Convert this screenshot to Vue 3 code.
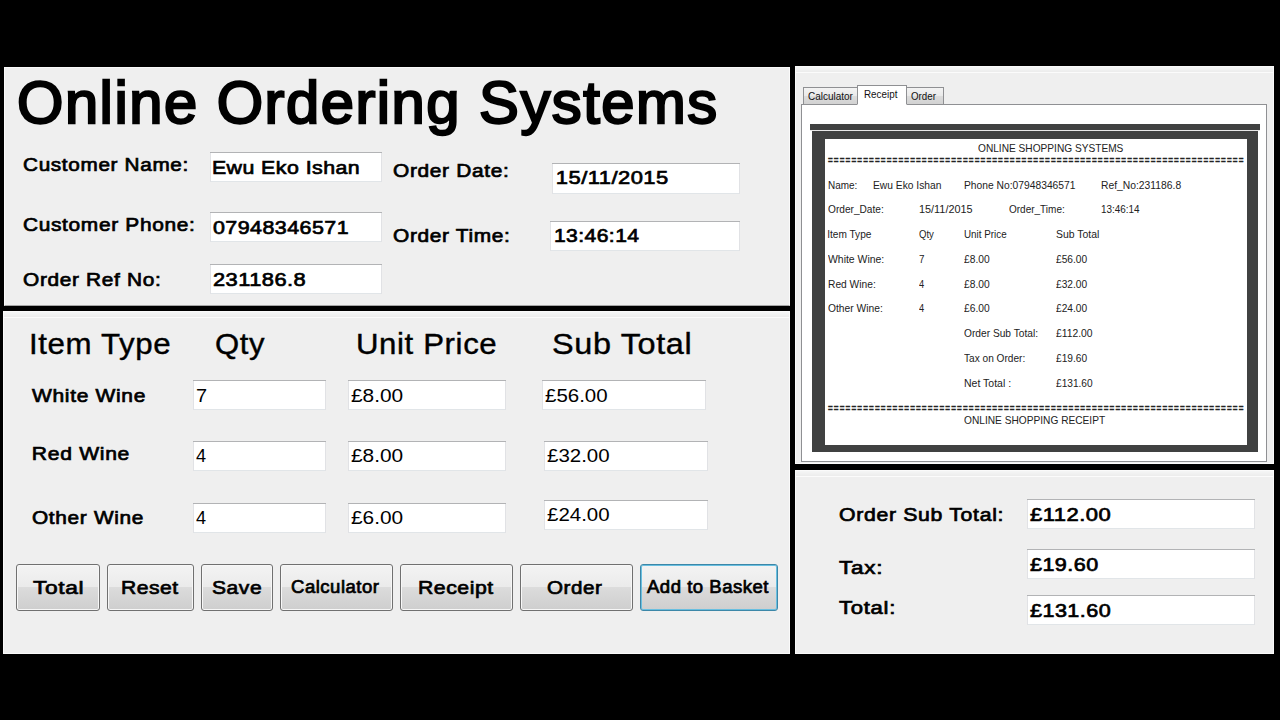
<script setup>
const customer = [
  { label: 'Customer Name:', lw: 164, value: 'Ewu Eko Ishan', vw: 146, cls: 'name' },
  { label: 'Customer Phone:', lw: 170.5, value: '07948346571', vw: 135, cls: 'phone' },
  { label: 'Order Ref No:', lw: 136.5, value: '231186.8', vw: 92, cls: 'ref' },
]
const timing = [
  { label: 'Order Date:', lw: 114.5, value: '15/11/2015', vw: 110.5, cls: 'date' },
  { label: 'Order Time:', lw: 116, value: '13:46:14', vw: 84.5, cls: 'time' },
]
const items = [
  { label: 'White Wine', lw: 113, qty: '7', price: '£8.00', sub: '£56.00' },
  { label: 'Red Wine', lw: 96, qty: '4', price: '£8.00', sub: '£32.00' },
  { label: 'Other Wine', lw: 111, qty: '4', price: '£6.00', sub: '£24.00' },
]
const buttons = [
  { text: 'Total', w: 49, cls: 'b-total' },
  { text: 'Reset', w: 57, cls: 'b-reset' },
  { text: 'Save', w: 49, cls: 'b-save' },
  { text: 'Calculator', w: 88, cls: 'b-calc' },
  { text: 'Receipt', w: 75, cls: 'b-receipt' },
  { text: 'Order', w: 55.5, cls: 'b-order' },
  { text: 'Add to Basket', w: 121.5, cls: 'b-basket' },
]
const totals = [
  { label: 'Order Sub Total:', lw: 163.5, value: '£112.00', vw: 80, cls: 't-sub' },
  { label: 'Tax:', lw: 42, value: '£19.60', vw: 67.5, cls: 't-tax' },
  { label: 'Total:', lw: 55, value: '£131.60', vw: 80, cls: 't-total' },
]
const lines = [
  { type: 'Item Type', w: 44, qty: 'Qty', qw: 15, price: 'Unit Price', pw: 43, sub: 'Sub Total', sw: 43 },
  { type: 'White Wine:', w: 56, qty: '7', qw: 5, price: '£8.00', pw: 26, sub: '£56.00', sw: 31.5 },
  { type: 'Red Wine:', w: 47.5, qty: '4', qw: 5.5, price: '£8.00', pw: 26, sub: '£32.00', sw: 31.5 },
  { type: 'Other Wine:', w: 54.5, qty: '4', qw: 5.5, price: '£6.00', pw: 26, sub: '£24.00', sw: 31.5 },
  { price: 'Order Sub Total:', pw: 74, sub: '£112.00', sw: 37 },
  { price: 'Tax on Order:', pw: 61, sub: '£19.60', sw: 31.5 },
  { price: 'Net Total :', pw: 47, sub: '£131.60', sw: 37 },
]
const rule = '='.repeat(71)

// Stretches a line of text so that its visible glyphs span the given width.
const ctx = document.createElement('canvas').getContext('2d')
const px = (v) => (v.endsWith('px') ? v : '0px')
const vFit = (el, { value }) => {
  const s = getComputedStyle(el)
  const gaps = el.textContent.length - 1
  ctx.font = `${s.fontWeight} ${s.fontSize} ${s.fontFamily}`
  const m = ctx.measureText(el.textContent)
  const spaces = el.textContent.split(' ').length - 1
  const extra = gaps * parseFloat(px(s.letterSpacing)) + spaces * parseFloat(px(s.wordSpacing))
  const k = value / (m.actualBoundingBoxLeft + m.actualBoundingBoxRight + extra)
  el.style.width = `${value}px`
  el.style.transform = `translateX(${m.actualBoundingBoxLeft * k}px) scaleX(${k})`
}
</script>

<template>
  <main class="stage">
    <div class="left">
      <section class="panel customer">
        <h1><span v-fit="696.5" class="t">Online Ordering Systems</span></h1>
        <div class="pairs">
          <div class="col">
            <div v-for="c in customer" :key="c.cls" class="pair" :class="c.cls">
              <div class="label"><span v-fit="c.lw" class="t">{{ c.label }}</span></div>
              <div class="field bold"><span v-fit="c.vw" class="t">{{ c.value }}</span></div>
            </div>
          </div>
          <div class="col">
            <div v-for="c in timing" :key="c.cls" class="pair" :class="c.cls">
              <div class="label"><span v-fit="c.lw" class="t">{{ c.label }}</span></div>
              <div class="field bold"><span v-fit="c.vw" class="t">{{ c.value }}</span></div>
            </div>
          </div>
        </div>
      </section>

      <section class="panel order">
        <div class="strip"></div>
        <div class="row head">
          <span v-fit="139.5" class="t">Item Type</span>
          <span v-fit="48.5" class="t c2">Qty</span>
          <span v-fit="138" class="t c3">Unit Price</span>
          <span v-fit="137.5" class="t c4">Sub Total</span>
        </div>
        <div v-for="(i, n) in items" :key="i.label" class="row item" :class="'item' + n">
          <div class="label"><span v-fit="i.lw" class="t">{{ i.label }}</span></div>
          <div class="field"><span v-fit="10.5" class="t">{{ i.qty }}</span></div>
          <div class="field"><span v-fit="51.5" class="t">{{ i.price }}</span></div>
          <div class="field sub"><span v-fit="62" class="t">{{ i.sub }}</span></div>
        </div>
        <div class="buttons">
          <button v-for="b in buttons" :key="b.text" :class="b.cls">
            <span v-fit="b.w" class="t">{{ b.text }}</span>
          </button>
        </div>
      </section>
    </div>

    <div class="right">
      <section class="panel viewer">
        <div class="strip"></div>
        <nav class="tabs">
          <div class="tab calc"><span v-fit="45" class="t">Calculator</span></div>
          <div class="tab active"><span v-fit="34" class="t">Receipt</span></div>
          <div class="tab ord"><span v-fit="25" class="t">Order</span></div>
        </nav>
        <div class="page">
          <div class="bar"></div>
          <div class="frame">
            <div class="paper">
              <div class="line title"><span v-fit="145.5" class="t">ONLINE SHOPPING SYSTEMS</span></div>
              <div class="rule"><span v-fit="415.5" class="t">{{ rule }}</span></div>
              <div class="line who">
                <span v-fit="29" class="t">Name:</span>
                <span v-fit="68" class="t">Ewu Eko Ishan</span>
                <span v-fit="111" class="t">Phone No:07948346571</span>
                <span v-fit="80.5" class="t">Ref_No:231186.8</span>
              </div>
              <div class="line when">
                <span v-fit="55.5" class="t">Order_Date:</span>
                <span v-fit="54" class="t">15/11/2015</span>
                <span v-fit="55.5" class="t">Order_Time:</span>
                <span v-fit="39" class="t">13:46:14</span>
              </div>
              <div v-for="(l, n) in lines" :key="n" class="line cols">
                <div><span v-if="l.type" v-fit="l.w" class="t">{{ l.type }}</span></div>
                <div><span v-if="l.qty" v-fit="l.qw" class="t">{{ l.qty }}</span></div>
                <div><span v-fit="l.pw" class="t">{{ l.price }}</span></div>
                <div><span v-fit="l.sw" class="t">{{ l.sub }}</span></div>
              </div>
              <div class="rule second"><span v-fit="415.5" class="t">{{ rule }}</span></div>
              <div class="line foot"><span v-fit="141" class="t">ONLINE SHOPPING RECEIPT</span></div>
            </div>
          </div>
        </div>
      </section>

      <section class="panel totals">
        <div class="strip"></div>
        <div v-for="t in totals" :key="t.cls" class="pair" :class="t.cls">
          <div class="label"><span v-fit="t.lw" class="t">{{ t.label }}</span></div>
          <div class="field bold"><span v-fit="t.vw" class="t">{{ t.value }}</span></div>
        </div>
      </section>
    </div>
  </main>
</template>

<style>
body { background: #000; }
</style>

<style scoped>
* { box-sizing: border-box; }
.stage {
  width: 1280px; height: 720px; overflow: hidden; background: #000;
  display: flex; gap: 5px; padding: 66px 0 0 3px;
  font-family: "Liberation Sans", Arial, sans-serif; color: #000;
}
.t { display: inline-block; white-space: pre; transform-origin: 0 50%; flex: none; text-align: left; }
.left { width: 787px; display: flex; flex-direction: column; gap: 5px; padding-top: 1px; }
.right { width: 479px; display: flex; flex-direction: column; gap: 6px; }
.panel { background: #efefef; border: 1px solid #fafafa; flex: none; overflow: hidden; }
.strip { height: 6px; background: linear-gradient(#f5f6f6, #ececec); border-bottom: 1px solid #fbfbfb; }

.label {
  height: 30px; line-height: 30px; font-size: 18.5px; letter-spacing: .6px;
  -webkit-text-stroke: .7px #000; display: flex; flex: none;
}
.field {
  height: 30px; line-height: 31px; font-size: 19px; background: #fff; display: flex; flex: none; padding-left: 3px;
  box-shadow: inset 0 1px #b2b3b5, inset 1px 0 #e1e2e5, inset -1px 0 #e1e2e5, inset 0 -1px #e1e5e8;
}
.field.bold { -webkit-text-stroke: .7px #000; letter-spacing: .4px; }
.pair { display: flex; align-items: flex-start; }

/* customer */
.customer { margin-left: 1px; height: 239px; border-bottom-color: #a5a5a5; }
h1 {
  margin: 0; padding-left: 14px; height: 84px; line-height: 71px; display: flex;
  font-size: 59px; font-weight: 400; letter-spacing: 1.5px; -webkit-text-stroke: 2.3px #000;
}
.pairs { display: flex; }
.col:first-child { width: 388px; }
.col:first-child .pair { padding-left: 18px; }
.col:first-child .label { width: 187px; }
.col:first-child .field { width: 172px; }
.name { height: 60px; }
.phone { height: 52px; }
.name .label, .phone .label { margin-top: -2.5px; }
.ref .label { margin-top: .5px; }
.col:last-child .label { width: 158px; }
.date { padding-top: 3.5px; height: 69px; }
.date .field { margin: 7px 0 0 1px; height: 31px; line-height: 29.5px; width: 188px; padding-left: 5px; }
.time .label { margin-top: -.5px; }
.time .field { width: 190px; padding-left: 5px; margin-left: -1px; line-height: 29.5px; }

/* order */
.order { height: 343px; }
.row { display: flex; align-items: flex-start; padding-left: 28px; }
.head { height: 62px; line-height: 30px; font-size: 30px; letter-spacing: .6px; padding: 11px 0 0 26.5px; -webkit-text-stroke: .4px #000; }
.c2 { margin-left: 46px; }
.c3 { margin-left: 93px; }
.c4 { margin-left: 57.5px; }
.item { height: 61px; }
.item .label { width: 161px; }
.item .field:nth-child(2) { width: 133px; padding-left: 2.5px; margin-right: 22px; }
.item .field:nth-child(3) { width: 158px; margin-right: 36px; }
.item .sub { width: 164px; padding-left: 2.5px; }
.item0 .label { margin-top: .5px; }
.item1 .label { margin-top: -2.5px; padding-left: .5px; }
.item1 .field, .item2 .field { line-height: 30px; }
.item1 .sub, .item2 .sub { margin-left: 2px; }
.item2 { padding-top: .5px; }
.item2 .sub { margin-top: -2.5px; }
.buttons { display: flex; gap: 7px; padding-left: 12px; margin-top: 1px; }
button {
  font: 19px/46px "Liberation Sans", Arial, sans-serif; letter-spacing: .5px; -webkit-text-stroke: .7px #000; color: #000;
  height: 47px; padding: 0; border: 1px solid #707070; border-radius: 3px;
  background: linear-gradient(#f3f3f3 0%, #ebebeb 48%, #dcdcdc 49%, #cecece 100%);
  box-shadow: inset 0 0 0 1px #f7f7f7; flex: none; display: flex; justify-content: center;
}
.b-total { width: 84px; } .b-reset { width: 87px; } .b-save { width: 72px; }
.b-calc, .b-receipt { width: 113px; } .b-order { width: 113px; }
.b-calc, .b-basket { font-size: 18px; line-height: 45px; }
.b-basket { width: 138px; border-color: #3c87a8; box-shadow: inset 0 0 0 1px #69bfe0; }
.b-total, .b-save, .b-basket { padding-right: 2px; }
.b-order, .b-calc { padding-right: 4px; }
.b-receipt { padding-right: 1px; }

/* receipt viewer */
.viewer { height: 398px; padding-left: 6px; }
.viewer .strip { margin-left: -6px; }
.tabs { display: flex; align-items: flex-end; height: 32px; font-size: 11.8px; position: relative; z-index: 1; padding-left: 1px; }
.tab { height: 18px; line-height: 17px; border: 1px solid #8f9093; background: linear-gradient(#f3f3f3, #eaeaea 48%, #dcdcdc 50%, #d2d2d2); flex: none; color: #111; }
.calc { width: 54px; padding-left: 4px; border-right: 0; }
.ord { width: 37px; padding-left: 3.5px; border-left: 0; }
.active { width: 50px; height: 20px; padding-left: 6px; line-height: 17px; background: #fff; border-bottom-color: #fff; }
.page { width: 466px; height: 358px; margin: -1px 0 0 -1px; background: #fff; border: 1px solid #8f9093; padding: 19px 0 0 8px; }
.bar { width: 450px; height: 7px; background: #404141; border-bottom: 1px solid #e8e8e8; }
.frame { margin-left: 2px; width: 446px; height: 321px; background: #404141; padding: 8px 0 0 13px; }
.paper { width: 422px; height: 306px; background: #fff; font-size: 11.8px; color: #222; padding: 1px 0 0 2.5px; }
.line { display: flex; height: 24.75px; line-height: 17px; }
.title { height: 16px; padding-left: 150px; }
.rule { height: 20.5px; line-height: 10px; font-size: 10px; letter-spacing: 1.4px; -webkit-text-stroke: .5px #222; padding-left: .5px; }
.who span:nth-child(2) { margin-left: 16px; }
.who span:nth-child(3) { margin-left: 23.5px; }
.who span:nth-child(4) { margin-left: 26px; }
.when span:nth-child(2) { margin-left: 36px; }
.when span:nth-child(3) { margin-left: 36px; }
.when span:nth-child(4) { margin-left: 36.5px; }
.cols { display: grid; grid-template-columns: 91px 45.5px 91.5px auto; }
.second { margin-top: 5px; height: 8px; }
.foot { padding-left: 136px; }

/* totals */
.totals { height: 184px; }
.totals .pair { padding-left: 42.5px; }
.totals .label { width: 188.5px; line-height: 31px; }
.totals .field { width: 228px; }
.t-sub { margin-top: 22px; height: 50px; }
.t-tax { height: 46px; }
.t-tax .label { margin-top: 2.5px; }
.t-total .label { margin-top: -3px; }
</style>
